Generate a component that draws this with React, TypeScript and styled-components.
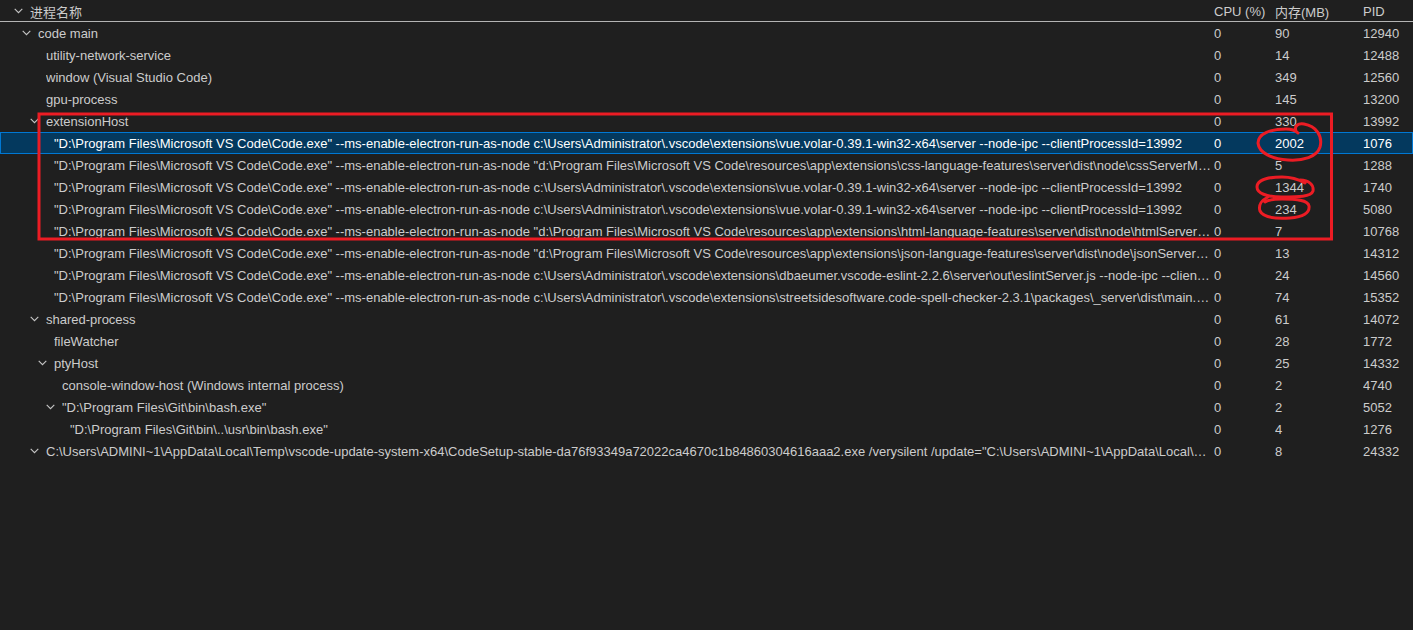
import React from "react";
import styled, { createGlobalStyle } from "styled-components";

const GlobalStyle = createGlobalStyle`
  html, body {
    margin: 0;
    padding: 0;
    background: #1f1f1f;
    height: 100%;
  }
  #root {
    min-height: 100%;
  }
  * { box-sizing: border-box; }
`;

const FONT = `"Liberation Sans", "Noto Sans CJK SC", Arial, sans-serif`;

const Page = styled.div`
  position: relative;
  width: 1413px;
  height: 630px;
  background: #1f1f1f;
  color: #cccccc;
  font-family: ${FONT};
  font-size: 13px;
  overflow: hidden;
`;

const Grid = `
  display: grid;
  grid-template-columns: minmax(0, 1fr) 61px 88px 50px;
  align-items: center;
`;

const HeaderRow = styled.div`
  ${Grid}
  height: 22px;
  border-bottom: 1px solid #b4b4b4;
`;

const Row = styled.div<{ $selected?: boolean }>`
  ${Grid}
  height: 22px;
  background: ${(p) => (p.$selected ? "#04395e" : "transparent")};
  color: ${(p) => (p.$selected ? "#ffffff" : "#cccccc")};
  box-shadow: ${(p) => (p.$selected ? "inset 0 0 0 1px #0078d4" : "none")};
`;

const NameCell = styled.div<{ $level: number }>`
  display: flex;
  align-items: center;
  min-width: 0;
  padding-left: ${(p) => 14 + p.$level * 8}px;
  padding-right: 2px;
`;

const Twistie = styled.span`
  flex: 0 0 16px;
  display: flex;
  align-items: center;
  justify-content: flex-start;
  height: 22px;
`;

const Label = styled.span`
  flex: 1 1 auto;
  min-width: 0;
  white-space: nowrap;
  overflow: hidden;
  text-overflow: ellipsis;
`;

const Cell = styled.div`
  white-space: nowrap;
  overflow: hidden;
`;

const Overlay = styled.svg`
  position: absolute;
  left: 0;
  top: 0;
  pointer-events: none;
`;

const Chevron = () => (
  <svg width="9" height="6" viewBox="0 0 9 6">
    <polyline points="0.7,0.9 4.5,4.7 8.3,0.9" fill="none" stroke="#c5c5c5" strokeWidth="1.1" />
  </svg>
);

type Proc = {
  name: string;
  level: number;
  open?: boolean;
  cpu: string;
  mem: string;
  pid: string;
  selected?: boolean;
};

const CODE = `"D:\\Program Files\\Microsoft VS Code\\Code.exe" --ms-enable-electron-run-as-node`;
const VOLAR = `${CODE} c:\\Users\\Administrator\\.vscode\\extensions\\vue.volar-0.39.1-win32-x64\\server --node-ipc --clientProcessId=13992`;
const RES = `${CODE} "d:\\Program Files\\Microsoft VS Code\\resources\\app\\extensions\\`;

const rows: Proc[] = [
  { name: "code main", level: 1, open: true, cpu: "0", mem: "90", pid: "12940" },
  { name: "utility-network-service", level: 2, cpu: "0", mem: "14", pid: "12488" },
  { name: "window (Visual Studio Code)", level: 2, cpu: "0", mem: "349", pid: "12560" },
  { name: "gpu-process", level: 2, cpu: "0", mem: "145", pid: "13200" },
  { name: "extensionHost", level: 2, open: true, cpu: "0", mem: "330", pid: "13992" },
  { name: VOLAR, level: 3, cpu: "0", mem: "2002", pid: "1076", selected: true },
  {
    name: `${RES}css-language-features\\server\\dist\\node\\cssServerMain.js" --node-ipc --clientProcessId=13992`,
    level: 3, cpu: "0", mem: "5", pid: "1288",
  },
  { name: VOLAR, level: 3, cpu: "0", mem: "1344", pid: "1740" },
  { name: VOLAR, level: 3, cpu: "0", mem: "234", pid: "5080" },
  {
    name: `${RES}html-language-features\\server\\dist\\node\\htmlServerMain.js" --node-ipc --clientProcessId=13992`,
    level: 3, cpu: "0", mem: "7", pid: "10768",
  },
  {
    name: `${RES}json-language-features\\server\\dist\\node\\jsonServerMain.js" --node-ipc --clientProcessId=13992`,
    level: 3, cpu: "0", mem: "13", pid: "14312",
  },
  {
    name: `${CODE} c:\\Users\\Administrator\\.vscode\\extensions\\dbaeumer.vscode-eslint-2.2.6\\server\\out\\eslintServer.js --node-ipc --clientProcessId=13992`,
    level: 3, cpu: "0", mem: "24", pid: "14560",
  },
  {
    name: `${CODE} c:\\Users\\Administrator\\.vscode\\extensions\\streetsidesoftware.code-spell-checker-2.3.1\\packages\\_server\\dist\\main.js --node-ipc --clientProcessId=13992`,
    level: 3, cpu: "0", mem: "74", pid: "15352",
  },
  { name: "shared-process", level: 2, open: true, cpu: "0", mem: "61", pid: "14072" },
  { name: "fileWatcher", level: 3, cpu: "0", mem: "28", pid: "1772" },
  { name: "ptyHost", level: 3, open: true, cpu: "0", mem: "25", pid: "14332" },
  { name: "console-window-host (Windows internal process)", level: 4, cpu: "0", mem: "2", pid: "4740" },
  { name: `"D:\\Program Files\\Git\\bin\\bash.exe"`, level: 4, open: true, cpu: "0", mem: "2", pid: "5052" },
  { name: `"D:\\Program Files\\Git\\bin\\..\\usr\\bin\\bash.exe"`, level: 5, cpu: "0", mem: "4", pid: "1276" },
  {
    name: `C:\\Users\\ADMINI~1\\AppData\\Local\\Temp\\vscode-update-system-x64\\CodeSetup-stable-da76f93349a72022ca4670c1b84860304616aaa2.exe /verysilent /update="C:\\Users\\ADMINI~1\\AppData\\Local\\Temp\\vscode-update-system-x64\\update.flag"`,
    level: 2, open: true, cpu: "0", mem: "8", pid: "24332",
  },
];

const RED = "#ec1c24";

export default function App() {
  return (
    <>
      <GlobalStyle />
      <Page>
        <HeaderRow>
          <NameCell $level={0}>
            <Twistie>
              <Chevron />
            </Twistie>
            <Label>进程名称</Label>
          </NameCell>
          <Cell>CPU (%)</Cell>
          <Cell>内存(MB)</Cell>
          <Cell>PID</Cell>
        </HeaderRow>
        {rows.map((r, i) => (
          <Row key={i} $selected={r.selected}>
            <NameCell $level={r.level}>
              <Twistie>{r.open ? <Chevron /> : null}</Twistie>
              <Label>{r.name}</Label>
            </NameCell>
            <Cell>{r.cpu}</Cell>
            <Cell>{r.mem}</Cell>
            <Cell>{r.pid}</Cell>
          </Row>
        ))}
        <Overlay width="1413" height="630" viewBox="0 0 1413 630">
          <g fill="none" stroke={RED} strokeWidth="3" strokeLinecap="round" strokeLinejoin="round">
            <rect x="39" y="114" width="1292.5" height="125" strokeLinecap="butt" strokeLinejoin="miter" />
            <path d="M1296,131 C1294,126 1298,123 1304,124 C1316,126 1323,136 1320,147 C1317,157 1303,161 1288,160 C1272,159 1259,153 1258,143 C1258,134 1270,129 1286,129 C1291,129 1295,130 1298,133" />
            <path d="M1300,180 C1309,180 1314,185 1313,191 C1311,197 1298,197 1282,197 C1266,197 1257,193 1257,187 C1257,180 1268,177 1282,177 C1292,177 1298,179 1305,183" />
            <path d="M1268,197 C1262,200 1258,205 1260,211 C1263,217 1275,219 1290,218 C1303,217 1310,213 1309,206 C1308,200 1296,199 1282,199 C1274,199 1268,200 1265,202" />
          </g>
        </Overlay>
      </Page>
    </>
  );
}
